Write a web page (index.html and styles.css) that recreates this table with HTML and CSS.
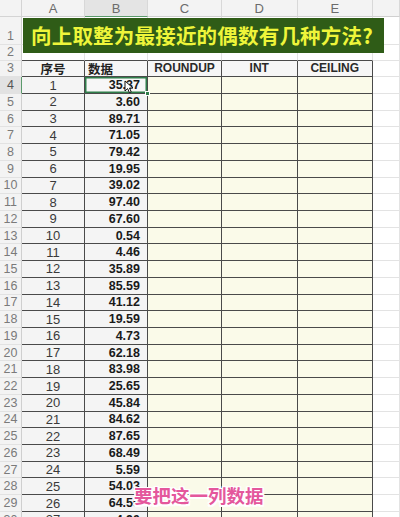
FILE: index.html
```html
<!DOCTYPE html>
<html lang="zh">
<head>
<meta charset="utf-8">
<link rel="stylesheet" href="styles.css">
</head>
<body>
<div class="sheet">
  <div class="corner"></div><div class="ch">A</div><div class="ch sel">B</div><div class="ch">C</div><div class="ch">D</div><div class="ch">E</div><div class="ch"></div>

  <div class="rh r1">1</div><div class="c"></div><div class="c"></div><div class="c"></div><div class="c"></div><div class="c"></div><div class="c"></div>
  <div class="rh">2</div><div class="c top"></div><div class="c top"></div><div class="c top"></div><div class="c top"></div><div class="c top"></div><div class="c"></div>

  <div class="rh tr">3</div><div class="t hd ctr">序号</div><div class="t hd lft">数据</div><div class="t hd ctr en">ROUNDUP</div><div class="t hd ctr en">INT</div><div class="t hd ctr en">CEILING</div><div class="c"></div>

  <div class="rh tr rsel">4</div><div class="t a">1</div><div class="t b cur">35.37<span class="handle"></span><svg class="pointer" width="12" height="14" viewBox="0 0 12 14"><path d="M1 1 L1 11 L3.6 8.6 L5.4 12.6 L7.2 11.8 L5.5 8 L9 8 Z" fill="#fff" stroke="#111" stroke-width="1"/></svg></div><div class="t f"></div><div class="t f"></div><div class="t f"></div><div class="c"></div>
  <div class="rh tr">5</div><div class="t a">2</div><div class="t b">3.60</div><div class="t f"></div><div class="t f"></div><div class="t f"></div><div class="c"></div>
  <div class="rh tr">6</div><div class="t a">3</div><div class="t b">89.71</div><div class="t f"></div><div class="t f"></div><div class="t f"></div><div class="c"></div>
  <div class="rh tr">7</div><div class="t a">4</div><div class="t b">71.05</div><div class="t f"></div><div class="t f"></div><div class="t f"></div><div class="c"></div>
  <div class="rh tr">8</div><div class="t a">5</div><div class="t b">79.42</div><div class="t f"></div><div class="t f"></div><div class="t f"></div><div class="c"></div>
  <div class="rh tr">9</div><div class="t a">6</div><div class="t b">19.95</div><div class="t f"></div><div class="t f"></div><div class="t f"></div><div class="c"></div>
  <div class="rh tr">10</div><div class="t a">7</div><div class="t b">39.02</div><div class="t f"></div><div class="t f"></div><div class="t f"></div><div class="c"></div>
  <div class="rh tr">11</div><div class="t a">8</div><div class="t b">97.40</div><div class="t f"></div><div class="t f"></div><div class="t f"></div><div class="c"></div>
  <div class="rh tr">12</div><div class="t a">9</div><div class="t b">67.60</div><div class="t f"></div><div class="t f"></div><div class="t f"></div><div class="c"></div>
  <div class="rh tr">13</div><div class="t a">10</div><div class="t b">0.54</div><div class="t f"></div><div class="t f"></div><div class="t f"></div><div class="c"></div>
  <div class="rh tr">14</div><div class="t a">11</div><div class="t b">4.46</div><div class="t f"></div><div class="t f"></div><div class="t f"></div><div class="c"></div>
  <div class="rh tr">15</div><div class="t a">12</div><div class="t b">35.89</div><div class="t f"></div><div class="t f"></div><div class="t f"></div><div class="c"></div>
  <div class="rh tr">16</div><div class="t a">13</div><div class="t b">85.59</div><div class="t f"></div><div class="t f"></div><div class="t f"></div><div class="c"></div>
  <div class="rh tr">17</div><div class="t a">14</div><div class="t b">41.12</div><div class="t f"></div><div class="t f"></div><div class="t f"></div><div class="c"></div>
  <div class="rh tr">18</div><div class="t a">15</div><div class="t b">19.59</div><div class="t f"></div><div class="t f"></div><div class="t f"></div><div class="c"></div>
  <div class="rh tr">19</div><div class="t a">16</div><div class="t b">4.73</div><div class="t f"></div><div class="t f"></div><div class="t f"></div><div class="c"></div>
  <div class="rh tr">20</div><div class="t a">17</div><div class="t b">62.18</div><div class="t f"></div><div class="t f"></div><div class="t f"></div><div class="c"></div>
  <div class="rh tr">21</div><div class="t a">18</div><div class="t b">83.98</div><div class="t f"></div><div class="t f"></div><div class="t f"></div><div class="c"></div>
  <div class="rh tr">22</div><div class="t a">19</div><div class="t b">25.65</div><div class="t f"></div><div class="t f"></div><div class="t f"></div><div class="c"></div>
  <div class="rh tr">23</div><div class="t a">20</div><div class="t b">45.84</div><div class="t f"></div><div class="t f"></div><div class="t f"></div><div class="c"></div>
  <div class="rh tr">24</div><div class="t a">21</div><div class="t b">84.62</div><div class="t f"></div><div class="t f"></div><div class="t f"></div><div class="c"></div>
  <div class="rh tr">25</div><div class="t a">22</div><div class="t b">87.65</div><div class="t f"></div><div class="t f"></div><div class="t f"></div><div class="c"></div>
  <div class="rh tr">26</div><div class="t a">23</div><div class="t b">68.49</div><div class="t f"></div><div class="t f"></div><div class="t f"></div><div class="c"></div>
  <div class="rh tr">27</div><div class="t a">24</div><div class="t b">5.59</div><div class="t f"></div><div class="t f"></div><div class="t f"></div><div class="c"></div>
  <div class="rh tr">28</div><div class="t a">25</div><div class="t b">54.03</div><div class="t f"></div><div class="t f"></div><div class="t f"></div><div class="c"></div>
  <div class="rh tr">29</div><div class="t a">26</div><div class="t b">64.59</div><div class="t f"></div><div class="t f"></div><div class="t f"></div><div class="c"></div>
  <div class="rh tr">30</div><div class="t a">27</div><div class="t b">4.90</div><div class="t f"></div><div class="t f"></div><div class="t f"></div><div class="c"></div>

  <div class="title">向上取整为最接近的偶数有几种方法?</div>
  <div class="caption">要把这一列数据</div>
</div>
</body>
</html>
```

FILE: styles.css
```css
html, body {
  margin: 0;
  padding: 0;
  background: #ffffff;
  overflow: hidden;
}
body {
  width: 400px;
  height: 517px;
  font-family: "Liberation Sans", "Noto Sans CJK SC", sans-serif;
}
.sheet {
  position: relative;
  display: grid;
  grid-template-columns: 22px 63px 63px 74px 75.5px 75.5px 27px;
  grid-template-rows: 17px 28px 15.5px repeat(28, 16.72px);
  width: 400px;
}
.sheet > div {
  box-sizing: border-box;
}
.corner {
  background: #f3f3f3;
  border-right: 1px solid #d4d4d4;
  border-bottom: 1px solid #d4d4d4;
}
.ch {
  background: #f3f3f3;
  color: #6b6b6b;
  font-size: 13px;
  display: flex;
  align-items: center;
  justify-content: center;
  border-right: 1px solid #d8d8d8;
  border-bottom: 1px solid #d0d0d0;
}
.ch.sel {
  background: #e4e4e4;
  border-bottom: 1px solid #5b9a6c;
}
.rh {
  background: #f3f3f3;
  color: #7a7a7a;
  font-size: 12.5px;
  display: flex;
  align-items: center;
  justify-content: center;
  border-right: 1px solid #cfcfcf;
  border-bottom: 1px solid #e2e2e2;
}
.rh.r1 {
  align-items: flex-end;
  padding-bottom: 1px;
}
.rh.rsel {
  background: #e2e2e2;
  color: #555;
  border-right: 1px solid #5b9a6c;
}
.c {
  border-right: 1px solid #e3e3e3;
  border-bottom: 1px solid #e3e3e3;
}
.c.top {
  border-bottom: 1px solid #4a4a4a;
}
.t {
  border-right: 1px solid #4a4a4a;
  border-bottom: 1px solid #4a4a4a;
  display: flex;
  align-items: center;
  color: #1a1a1a;
  white-space: nowrap;
  overflow: visible;
}
.hd {
  background: #f6f6f6;
  font-family: "Noto Sans CJK SC", sans-serif;
  font-weight: 700;
  font-size: 12.5px;
  color: #222;
}
.hd.en {
  font-family: "Liberation Sans", sans-serif;
  font-size: 12px;
  font-weight: 700;
  color: #2a2a2a;
}
.ctr { justify-content: center; }
.lft { justify-content: flex-start; padding-left: 3px; }
.a {
  background: #f4f4f4;
  justify-content: center;
  font-size: 13px;
  color: #3a3a3a;
}
.b {
  background: #f4f4f4;
  justify-content: flex-end;
  padding-right: 7px;
  font-size: 12.5px;
  font-weight: 700;
}
.f {
  background: #fafae9;
}
.cur {
  position: relative;
  box-shadow: inset 0 0 0 1.5px #2f7d4a;
  background: #f7f7f7;
}
.handle {
  position: absolute;
  right: -3px;
  bottom: -3px;
  width: 5px;
  height: 5px;
  background: #2f7d4a;
  border: 1px solid #fff;
  box-sizing: border-box;
}
.pointer {
  position: absolute;
  left: 39px;
  top: 3px;
}
.title {
  position: absolute;
  left: 23px;
  top: 17.5px;
  width: 361px;
  height: 35.5px;
  background: #2f5c17;
  color: #eef53a;
  font-family: "Noto Sans CJK SC", sans-serif;
  font-weight: 700;
  font-size: 20.5px;
  line-height: 35.5px;
  padding-left: 8px;
  box-sizing: border-box;
  white-space: nowrap;
  letter-spacing: 0.2px;
}
.caption {
  position: absolute;
  left: 134px;
  top: 484px;
  font-family: "Noto Sans CJK SC", sans-serif;
  font-weight: 700;
  font-size: 18.5px;
  line-height: 22px;
  color: #e4579c;
  white-space: nowrap;
  text-shadow: -1.5px -1.5px 0 #fff, 1.5px -1.5px 0 #fff, -1.5px 1.5px 0 #fff, 1.5px 1.5px 0 #fff, 0 1.5px 0 #fff, 0 -1.5px 0 #fff, 1.5px 0 0 #fff, -1.5px 0 0 #fff;
}
```
